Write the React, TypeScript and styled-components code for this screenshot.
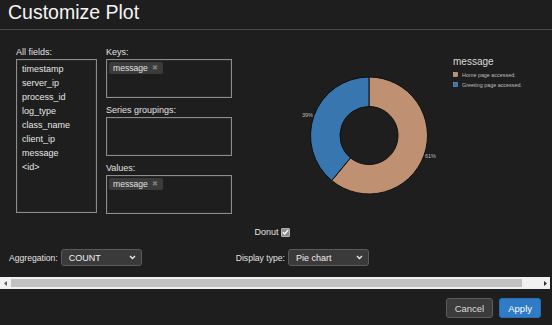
import React from 'react';
import styled, { createGlobalStyle } from 'styled-components';

const GlobalStyle = createGlobalStyle`
  html, body {
    margin: 0;
    padding: 0;
    background: #1e1e1e;
  }
  body {
    font-family: "Liberation Sans", Arial, sans-serif;
    color: #e6e6e6;
  }
`;

const Colors = {
  bg: '#1e1e1e',
  border: '#8c8c8c',
  label: '#e2e2e2',
  tag: '#3b3b3b',
  tan: '#bf9071',
  blue: '#3876b0',
  control: '#3a3a3a',
  primary: '#2f7bc5',
};

const Modal = styled.div`
  width: 552px;
  height: 325px;
  display: flex;
  flex-direction: column;
  background: ${Colors.bg};
  overflow: hidden;
`;

const Header = styled.div`
  height: 29px;
  border-bottom: 1px solid #4a4a4a;
  padding-left: 8px;
  box-sizing: content-box;
`;

const Title = styled.h1`
  margin: 0;
  font-size: 19.5px;
  line-height: 24px;
  font-weight: 400;
  color: #f4f4f4;
`;

const Body = styled.div`
  flex: 1;
  display: flex;
  flex-direction: column;
  padding-top: 16px;
`;

const TopRow = styled.div`
  display: flex;
  padding-left: 16px;
  height: 168px;
`;

const Column = styled.div<{ $width: number; $gap?: number }>`
  width: ${(p) => p.$width}px;
  margin-right: ${(p) => p.$gap ?? 0}px;
  display: flex;
  flex-direction: column;
`;

const Label = styled.div<{ $spaced?: boolean }>`
  font-size: 9px;
  line-height: 13px;
  color: ${Colors.label};
  margin-top: ${(p) => (p.$spaced ? 6 : 0)}px;
`;

const Box = styled.div<{ $height: number }>`
  box-sizing: border-box;
  height: ${(p) => p.$height}px;
  border: 1px solid ${Colors.border};
  box-shadow: inset 0 0 0 1px #2a2a2a;
  padding: 2px;
  display: flex;
  flex-direction: column;
  align-items: flex-start;
`;

const FieldItem = styled.div`
  font-size: 9px;
  line-height: 14px;
  padding-left: 3px;
  color: #e6e6e6;
`;

const Tag = styled.span`
  display: inline-flex;
  align-items: center;
  height: 12px;
  width: 54px;
  box-sizing: border-box;
  padding: 0 0 0 4px;
  background: ${Colors.tag};
  border-radius: 2px;
  font-size: 8.6px;
  color: #e0e0e0;
`;

const TagX = styled.span`
  margin-left: auto;
  margin-right: 5px;
  font-size: 6.5px;
  color: #7e7e7e;
`;

const ChartWrap = styled.div`
  flex: 1;
`;

const DonutRow = styled.div`
  display: flex;
  justify-content: center;
  align-items: center;
  gap: 2px;
  margin-top: 12px;
  height: 12px;
  padding-right: 8px;
  font-size: 9px;
  color: ${Colors.label};
`;

const CheckBox = styled.span`
  width: 7px;
  height: 7px;
  background: #8d8d8d;
  border: 1px solid #b0b0b0;
  border-radius: 1px;
  display: inline-flex;
  align-items: center;
  justify-content: center;
  box-sizing: content-box;
`;

const ControlsRow = styled.div`
  display: flex;
  align-items: center;
  margin-top: 11px;
  padding-left: 9px;
  gap: 94px;
`;

const Control = styled.div`
  display: flex;
  align-items: center;
  gap: 3px;
  font-size: 8.6px;
  color: ${Colors.label};
`;

const Select = styled.div`
  box-sizing: border-box;
  width: 81px;
  height: 17px;
  display: flex;
  align-items: center;
  justify-content: space-between;
  padding: 0 5px 0 7px;
  background: ${Colors.control};
  border: 1px solid #5a5a5a;
  border-radius: 3px;
  font-size: 9px;
  color: #f0f0f0;
`;

const ScrollBar = styled.div`
  height: 12px;
  background: #f1f1f1;
  display: flex;
  align-items: center;
  border-right: 2px solid #1e1e1e;
`;

const ScrollArrow = styled.div<{ $dir: 'left' | 'right' }>`
  width: 10px;
  display: flex;
  justify-content: center;
  ${(p) => (p.$dir === 'left' ? 'margin-right: 1px;' : 'margin-left: auto;')}
`;

const Thumb = styled.div`
  width: 511px;
  height: 8px;
  background: #c1c1c1;
`;

const Footer = styled.div`
  height: 36px;
  display: flex;
  justify-content: flex-end;
  align-items: flex-start;
  gap: 6px;
  padding: 9px 11px 0 0;
  box-sizing: border-box;
`;

const Button = styled.button<{ $primary?: boolean }>`
  height: 20px;
  padding: 0 8px;
  border-radius: 3px;
  font-family: "Liberation Sans", Arial, sans-serif;
  font-size: 9.5px;
  cursor: pointer;
  color: ${(p) => (p.$primary ? '#ffffff' : '#dcdcdc')};
  background: ${(p) => (p.$primary ? Colors.primary : '#3c3c3c')};
  border: 1px solid ${(p) => (p.$primary ? '#2a6fb3' : '#5c5c5c')};
`;

const fields = ['timestamp', 'server_ip', 'process_id', 'log_type', 'class_name', 'client_ip', 'message', '<id>'];

const polar = (cx: number, cy: number, r: number, deg: number) => {
  const a = (deg * Math.PI) / 180;
  return [cx + r * Math.sin(a), cy - r * Math.cos(a)];
};

const slicePath = (cx: number, cy: number, ro: number, ri: number, from: number, to: number) => {
  const large = to - from > 180 ? 1 : 0;
  const [x1, y1] = polar(cx, cy, ro, from);
  const [x2, y2] = polar(cx, cy, ro, to);
  const [x3, y3] = polar(cx, cy, ri, to);
  const [x4, y4] = polar(cx, cy, ri, from);
  return `M${x1} ${y1} A${ro} ${ro} 0 ${large} 1 ${x2} ${y2} L${x3} ${y3} A${ri} ${ri} 0 ${large} 0 ${x4} ${y4} Z`;
};

const DonutChart = () => {
  const cx = 137;
  const cy = 89.5;
  const split = 0.61 * 360;
  return (
    <svg width="320" height="168" viewBox="0 0 320 168">
      <path d={slicePath(cx, cy, 58.5, 29, 0, split)} fill={Colors.tan} stroke="#0e0e0e" strokeWidth="1" />
      <path d={slicePath(cx, cy, 58.5, 29, split, 360)} fill={Colors.blue} stroke="#0e0e0e" strokeWidth="1" />
      <text x="70" y="71" fontSize="5.5" fill="#bdbdbd" fontFamily="Liberation Sans, Arial, sans-serif">39%</text>
      <text x="193" y="112" fontSize="5.5" fill="#bdbdbd" fontFamily="Liberation Sans, Arial, sans-serif">61%</text>
      <text x="221" y="18.5" fontSize="10" fill="#dcdcdc" fontFamily="Liberation Sans, Arial, sans-serif">message</text>
      <rect x="221.5" y="26.5" width="4" height="4" fill={Colors.tan} stroke="#d8b59c" strokeWidth="0.6" />
      <text x="230" y="30.5" fontSize="5.4" fill="#bdbdbd" fontFamily="Liberation Sans, Arial, sans-serif">Home page accessed.</text>
      <rect x="221.5" y="36.5" width="4" height="4" fill={Colors.blue} stroke="#6ea0d0" strokeWidth="0.6" />
      <text x="230" y="40.5" fontSize="5.4" fill="#bdbdbd" fontFamily="Liberation Sans, Arial, sans-serif">Greeting page accessed.</text>
    </svg>
  );
};

const Chevron = () => (
  <svg width="7" height="5" viewBox="0 0 7 5">
    <path d="M1 1 L3.5 3.5 L6 1" fill="none" stroke="#e8e8e8" strokeWidth="1.4" />
  </svg>
);

const MessageTag = () => (
  <Tag>
    message
    <TagX>✖</TagX>
  </Tag>
);

const App = () => (
  <Modal>
    <GlobalStyle />
    <Header>
      <Title>Customize Plot</Title>
    </Header>
    <Body>
      <TopRow>
        <Column $width={81} $gap={9}>
          <Label>All fields:</Label>
          <Box $height={154}>
            {fields.map((f) => (
              <FieldItem key={f}>{f}</FieldItem>
            ))}
          </Box>
        </Column>
        <Column $width={126}>
          <Label>Keys:</Label>
          <Box $height={39}>
            <MessageTag />
          </Box>
          <Label $spaced>Series groupings:</Label>
          <Box $height={39} />
          <Label $spaced>Values:</Label>
          <Box $height={39}>
            <MessageTag />
          </Box>
        </Column>
        <ChartWrap>
          <DonutChart />
        </ChartWrap>
      </TopRow>
      <DonutRow>
        Donut
        <CheckBox>
          <svg width="7" height="6" viewBox="0 0 7 6">
            <path d="M0.8 3.2 L2.7 5 L6.2 0.8" fill="none" stroke="#ffffff" strokeWidth="1.3" />
          </svg>
        </CheckBox>
      </DonutRow>
      <ControlsRow>
        <Control>
          Aggregation:
          <Select>
            COUNT
            <Chevron />
          </Select>
        </Control>
        <Control>
          Display type:
          <Select>
            Pie chart
            <Chevron />
          </Select>
        </Control>
      </ControlsRow>
    </Body>
    <ScrollBar>
      <ScrollArrow $dir="left">
        <svg width="3" height="5" viewBox="0 0 3 5">
          <path d="M3 0 L0 2.5 L3 5 Z" fill="#606060" />
        </svg>
      </ScrollArrow>
      <Thumb />
      <ScrollArrow $dir="right">
        <svg width="3" height="5" viewBox="0 0 3 5">
          <path d="M0 0 L3 2.5 L0 5 Z" fill="#303030" />
        </svg>
      </ScrollArrow>
    </ScrollBar>
    <Footer>
      <Button>Cancel</Button>
      <Button $primary>Apply</Button>
    </Footer>
  </Modal>
);

export default App;
